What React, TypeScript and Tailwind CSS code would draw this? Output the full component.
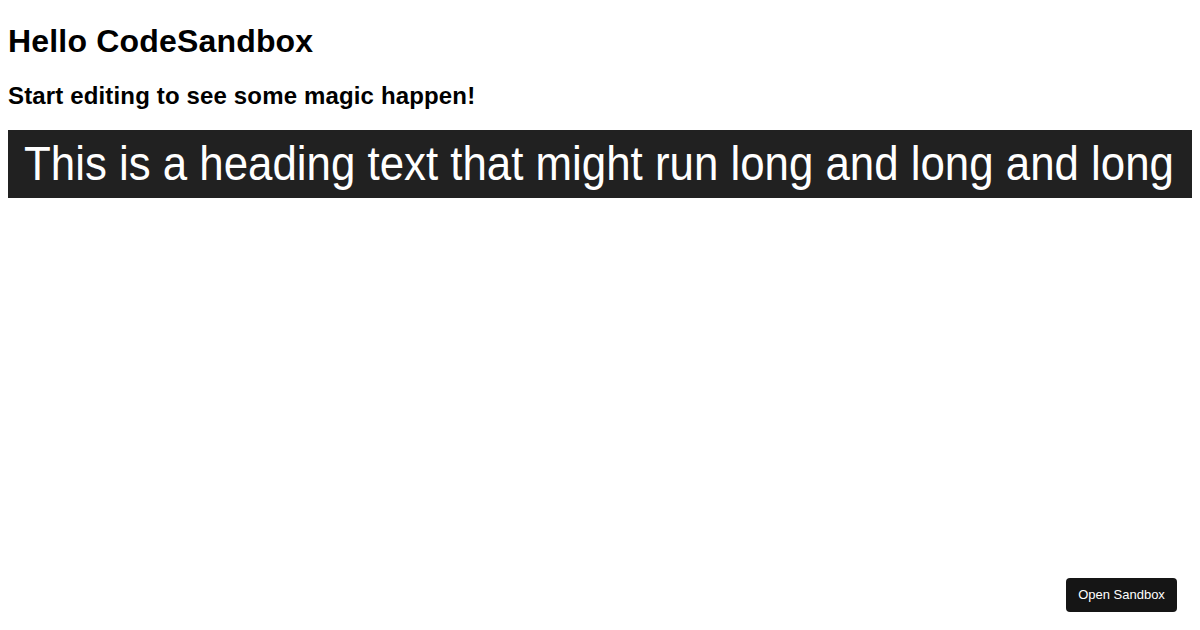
export default function App() {
  return (
    <div className="relative h-[630px] w-[1200px] bg-white px-2 font-['Liberation_Sans',Arial,sans-serif] text-black">
      <h1 className="pt-[22.5px] text-[32px] leading-[37px] font-bold tracking-[0.18px]">Hello CodeSandbox</h1>
      <h2 className="mt-[22.5px] text-[24px] leading-[27.6px] font-bold tracking-[0.15px]">
        Start editing to see some magic happen!
      </h2>
      <div className="mt-[20px] h-[68px] overflow-hidden bg-[#212121] px-4 text-[48px] leading-[68px] whitespace-nowrap text-white">
        <span className="inline-block origin-left scale-x-[0.913]">
          This is a heading text that might run long and long and long
        </span>
      </div>

      <button className="absolute right-[23px] bottom-[18px] h-[34px] w-[111px] rounded-[4px] bg-[#151515] text-[13px] text-white">
        Open Sandbox
      </button>
    </div>
  );
}
